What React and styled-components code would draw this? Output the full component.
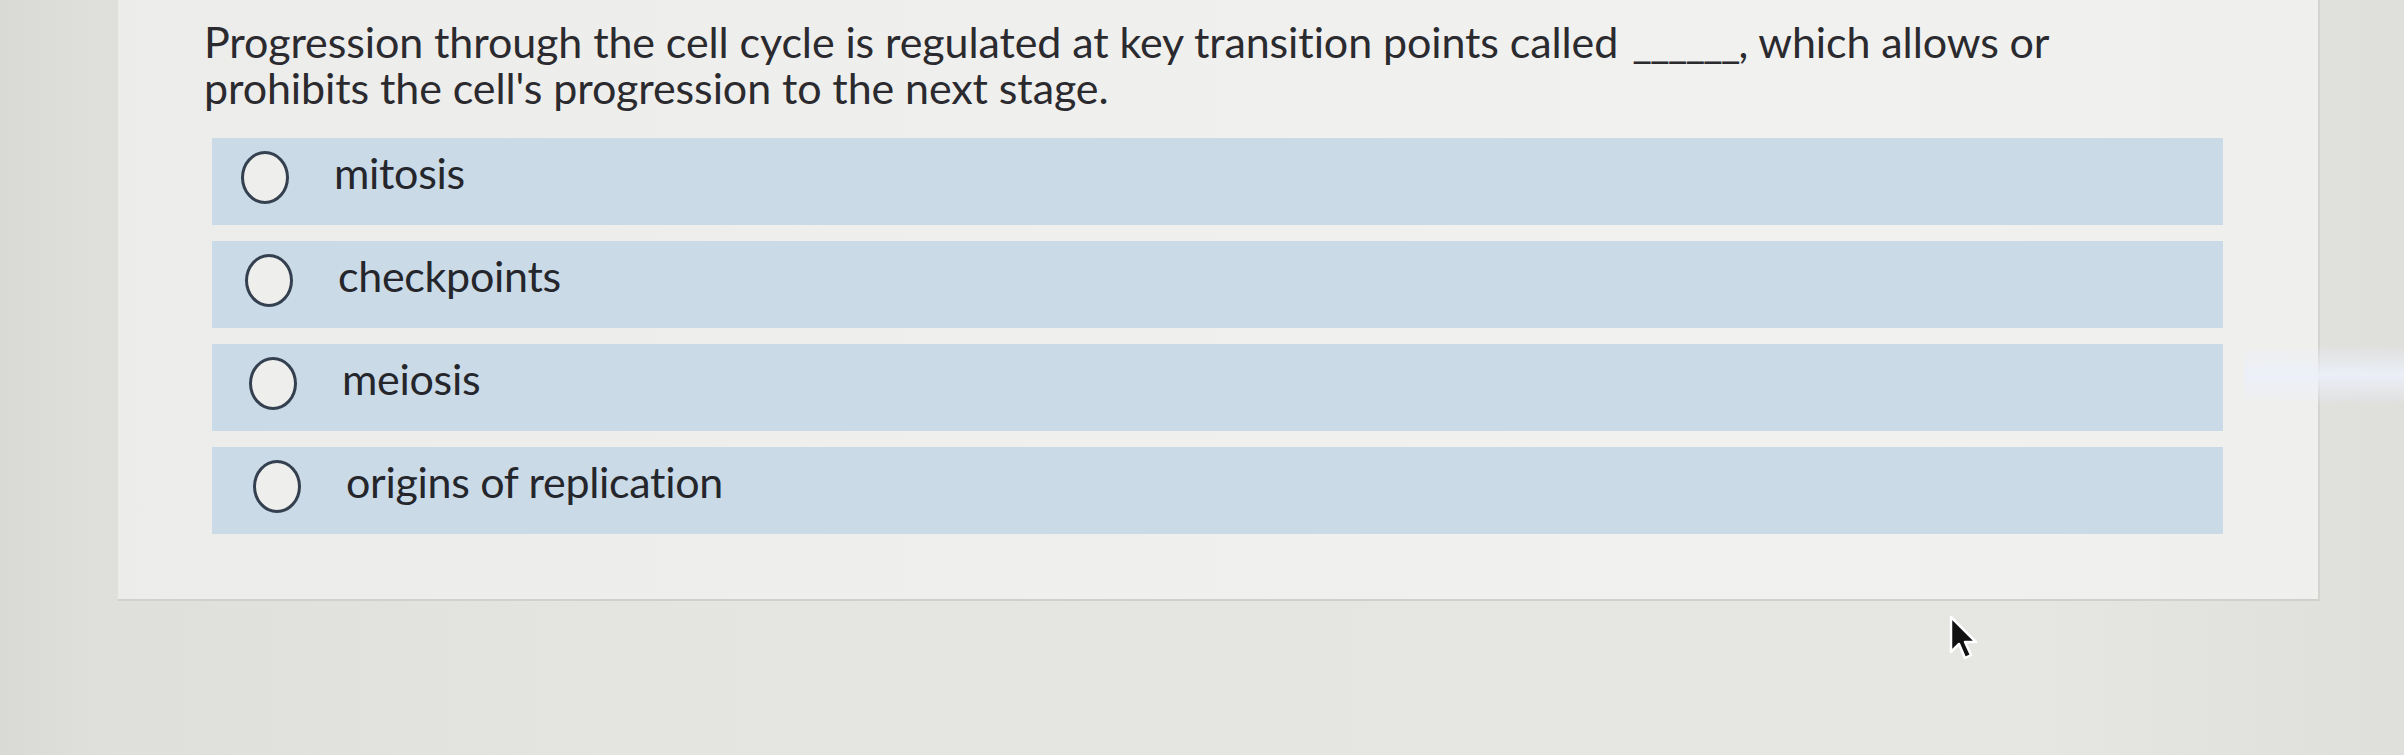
import styled, { createGlobalStyle } from 'styled-components'

const GlobalStyle = createGlobalStyle`
  html, body {
    margin: 0;
    padding: 0;
  }
  body {
    width: 2404px;
    height: 755px;
    overflow: hidden;
    background: #e2e2df;
    font-family: Lato, "Open Sans", sans-serif;
  }
`

const Page = styled.div`
  position: relative;
  width: 2404px;
  height: 755px;
  display: flex;
  align-items: flex-start;
  background: linear-gradient(90deg, #d9d9d6 0px, #dfdfdc 100px, #e4e4e1 600px, #e6e6e3 2000px, #dfdfdc 2404px);
`

const Card = styled.div`
  margin-left: 118px;
  width: 2202px;
  height: 601px;
  box-sizing: border-box;
  padding: 19px 0 0 86px;
  background: linear-gradient(90deg, #ececea 0%, #efefed 40%, #f1f1ef 75%, #efefed 100%);
  border-bottom: 2px solid #d0d0cd;
  border-right: 2px solid #d4d4d1;
  display: flex;
  flex-direction: column;
`

const Question = styled.p`
  margin: 0;
  width: 1920px;
  font-size: 43px;
  line-height: 46px;
  color: #2a2a2f;
  letter-spacing: -0.1px;
`

// each wrapped line of the prompt gets its own span
const Line = styled.span`
  display: block;
`

const Blank = styled.span`
  letter-spacing: -2px;
  margin-left: 14px;
`

const Options = styled.div`
  margin-top: 27px;
  margin-left: 8px;
  width: 2011px;
  display: flex;
  flex-direction: column;
  gap: 16px;
`

const Option = styled.label`
  height: 87px;
  box-sizing: border-box;
  padding: 0 0 8px ${(p) => 29 + p.$shift}px;
  display: flex;
  align-items: center;
  gap: 45px;
  background: #cadae7;
  cursor: pointer;
`

const Radio = styled.span`
  width: 42px;
  height: 47px;
  flex: none;
  border-radius: 50%;
  border: 3px solid #34404f;
  background: #eeeeec;
`

const OptionText = styled.span`
  font-size: 43px;
  line-height: 46px;
  color: #25262b;
  letter-spacing: -0.3px;
  margin-bottom: 10px;
`

const Glare = styled.div`
  position: absolute;
  right: 0;
  top: 345px;
  width: 160px;
  height: 60px;
  background: linear-gradient(180deg, rgba(236, 240, 250, 0) 0%, rgba(236, 240, 250, 0.9) 50%, rgba(236, 240, 250, 0) 100%);
  pointer-events: none;
`

const Pointer = styled.svg`
  position: absolute;
  left: 1948px;
  top: 614px;
  pointer-events: none;
`

const choices = ['mitosis', 'checkpoints', 'meiosis', 'origins of replication']

export default function App() {
  return (
    <>
      <GlobalStyle />
      <Page>
        <Card>
          <Question>
            <Line>
              Progression through the cell cycle is regulated at key transition points called
              <Blank>______</Blank>, which allows or
            </Line>
            <Line>prohibits the cell's progression to the next stage.</Line>
          </Question>
          <Options>
            {choices.map((c, i) => (
              <Option key={c} $shift={i * 4}>
                <Radio />
                <OptionText>{c}</OptionText>
              </Option>
            ))}
          </Options>
        </Card>
        <Glare />
        <Pointer width="32" height="48" viewBox="0 0 32 48">
          <path
            d="M3 3 L3 38 L11 30 L17 44 L23 41 L17 28 L28 28 Z"
            fill="#111"
            stroke="#fff"
            strokeWidth="2.5"
            strokeLinejoin="round"
          />
        </Pointer>
      </Page>
    </>
  )
}
